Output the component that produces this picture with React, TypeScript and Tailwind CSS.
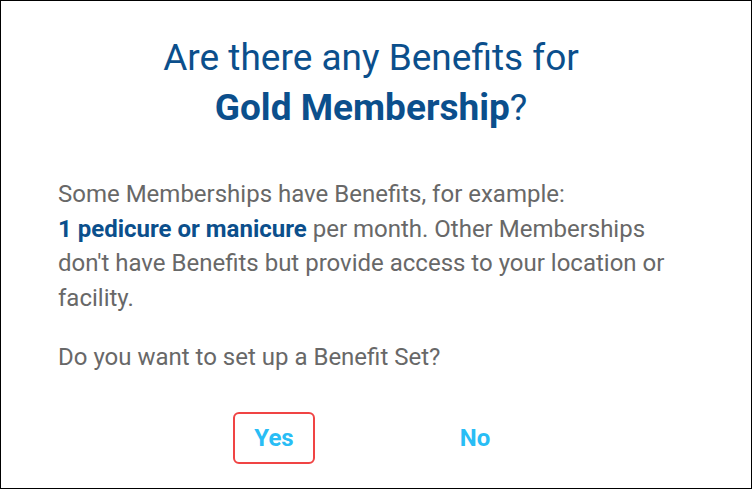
export default function App() {
  return (
    <div className="w-[752px] h-[489px] bg-white border border-black font-['Roboto',sans-serif]">
      <div className="pl-[57px] pt-[32px]">
        <h1 className="w-[626px] text-center text-[37px] leading-[50px] text-[#0b4f8c] font-normal">
          Are there any Benefits for
          <br />
          <span className="font-bold">Gold Membership</span>?
        </h1>
        <p className="w-[640px] mt-[44px] text-[24px] leading-[34.5px] text-[#686868]">
          Some Memberships have Benefits, for example:
          <br />
          <span className="font-bold text-[#0b4f8c]">1 pedicure or manicure</span> per
          month. Other Memberships don't have Benefits but provide access to your
          location or facility.
        </p>
        <p className="mt-[25px] text-[24px] leading-[34.5px] text-[#686868]">
          Do you want to set up a Benefit Set?
        </p>
        <div className="mt-[37px] flex gap-[119px] pl-[175px]">
          <button className="w-[82px] h-[52px] rounded-[6px] border-2 border-[#f04444] text-[24px] font-bold text-[#29bdf5]">
            Yes
          </button>
          <button className="w-[82px] h-[52px] rounded-[6px] text-[24px] font-bold text-[#29bdf5]">
            No
          </button>
        </div>
      </div>
    </div>
  )
}
